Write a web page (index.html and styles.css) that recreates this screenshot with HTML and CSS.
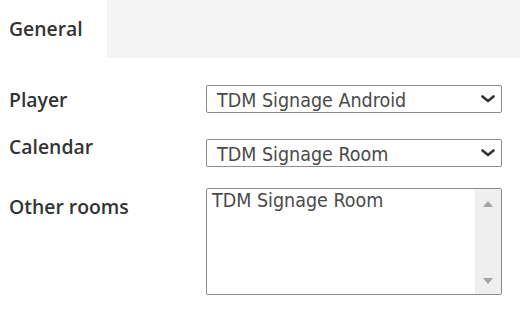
FILE: index.html
```html
<!DOCTYPE html>
<html lang="en">
<head>
<meta charset="utf-8">
<link rel="stylesheet" href="styles.css">
</head>
<body>
<header class="tabbar">
  <div class="tab">General</div>
  <div class="tab-fill"></div>
</header>
<main class="form">
  <div class="row row-player">
    <label class="label">Player</label>
    <div class="select">
      <span class="select-text">TDM Signage Android</span>
      <svg class="chev" width="14" height="8" viewBox="0 0 14 8"><path d="M1.5 1.5 L7 6 L12.5 1.5" fill="none" stroke="#333" stroke-width="2.6" stroke-linecap="round" stroke-linejoin="round"/></svg>
    </div>
  </div>
  <div class="row row-calendar">
    <label class="label">Calendar</label>
    <div class="select">
      <span class="select-text">TDM Signage Room</span>
      <svg class="chev" width="14" height="8" viewBox="0 0 14 8"><path d="M1.5 1.5 L7 6 L12.5 1.5" fill="none" stroke="#333" stroke-width="2.6" stroke-linecap="round" stroke-linejoin="round"/></svg>
    </div>
  </div>
  <div class="row row-rooms">
    <label class="label">Other rooms</label>
    <div class="listbox">
      <div class="list-items">
        <div class="list-item">TDM Signage Room</div>
      </div>
      <div class="scrollbar">
        <svg width="10" height="6" viewBox="0 0 10 6"><path d="M0 6 L5 0 L10 6 Z" fill="#a3a3a3"/></svg>
        <svg width="10" height="6" viewBox="0 0 10 6"><path d="M0 0 L5 6 L10 0 Z" fill="#a3a3a3"/></svg>
      </div>
    </div>
  </div>
</main>
</body>
</html>
```
FILE: styles.css
```css
html, body {
  margin: 0;
  padding: 0;
  background: #fff;
}
body {
  width: 520px;
  height: 319px;
  overflow: hidden;
  font-family: "Open Sans", "Noto Sans", sans-serif;
}
.tabbar {
  display: flex;
  height: 58px;
}
.tab {
  width: 98px;
  padding-left: 9px;
  line-height: 58px;
  font-size: 19.4px;
  font-weight: 600;
  color: #333;
}
.tab-fill {
  flex: 1;
  background: #f4f4f4;
}
.form {
  display: flex;
  flex-direction: column;
  padding-top: 27px;
  gap: 26px;
}
.row {
  display: flex;
  align-items: flex-start;
}
.row-rooms {
  margin-top: -5px;
}
.label {
  width: 197px;
  padding-left: 9px;
  font-size: 19.4px;
  font-weight: 600;
  line-height: 20px;
  color: #333;
}
.row-player .label { margin-top: 5px; }
.row-calendar .label { margin-top: -2px; }
.row-rooms .label { margin-top: 9px; }
.select {
  box-sizing: border-box;
  width: 296px;
  height: 28px;
  border: 1px solid #8c8c8c;
  border-radius: 2px;
  display: flex;
  align-items: center;
  justify-content: space-between;
  padding: 2px 6px 0 10px;
  background: #fff;
}
.select-text, .list-item {
  font-family: "DejaVu Sans Condensed", "DejaVu Sans", sans-serif;
  font-size: 19.5px;
  color: #4a4a4a;
  white-space: nowrap;
}
.chev {
  display: block;
  margin-top: -2px;
}
.listbox {
  box-sizing: border-box;
  width: 296px;
  height: 107px;
  border: 1px solid #8c8c8c;
  border-radius: 2px;
  display: flex;
  background: #fff;
}
.list-items {
  flex: 1;
  padding-left: 5px;
}
.list-item {
  line-height: 24px;
}
.scrollbar {
  width: 26px;
  background: #efefef;
  display: flex;
  flex-direction: column;
  align-items: center;
  justify-content: space-between;
  padding: 12px 0 10px;
}
.scrollbar svg { display: block; }
```
